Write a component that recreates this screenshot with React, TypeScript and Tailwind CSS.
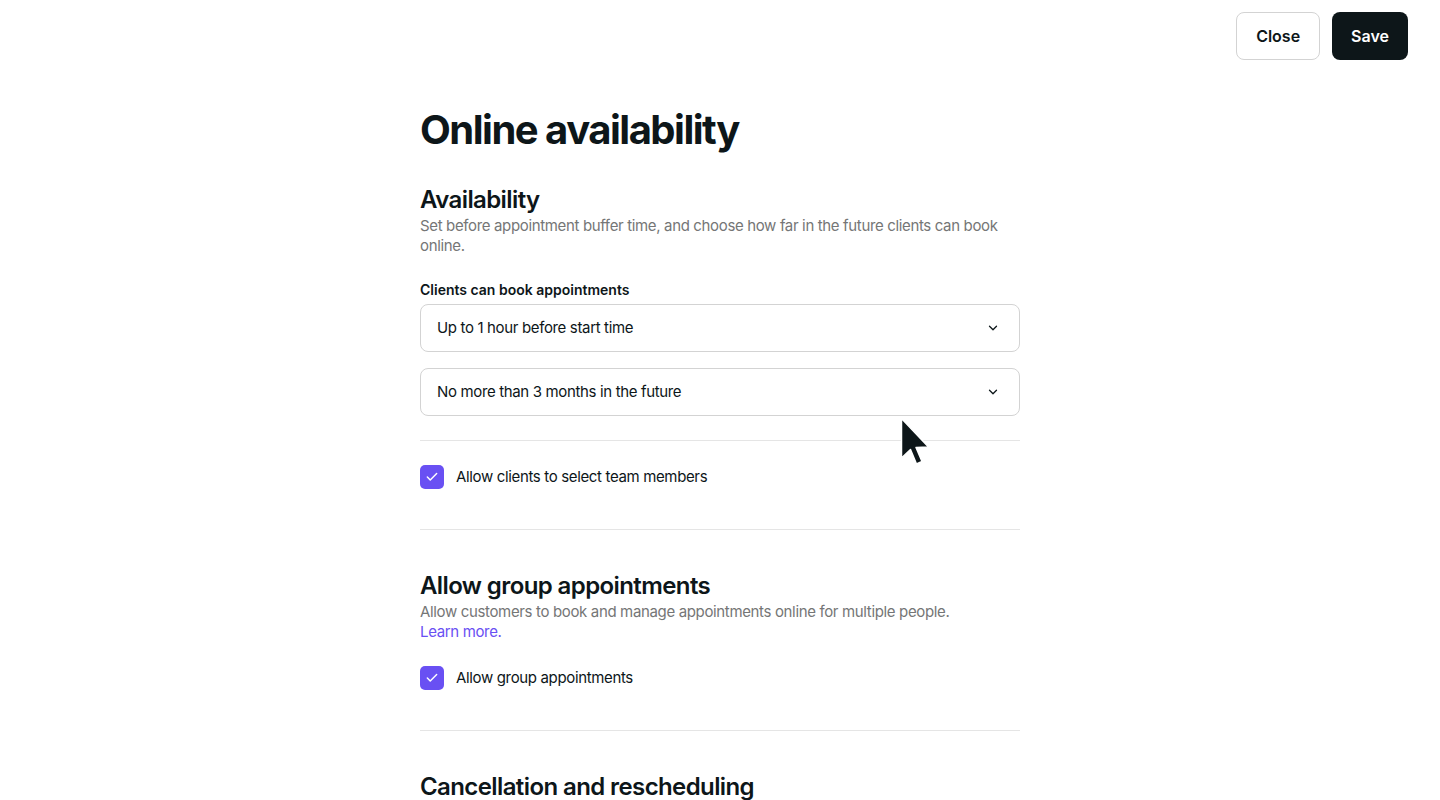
import React from "react";
import { ChevronDown, Check } from "lucide-react";

const font = { fontFamily: "Inter, 'Noto Sans', sans-serif" };

interface SelectProps {
  value: string;
}

const SelectBox: React.FC<SelectProps> = ({ value }) => {
  return (
    <div className="flex h-12 w-full items-center justify-between rounded-lg border border-[#d3d3d3] pl-4 pr-[19px] text-[15px] tracking-[-0.35px] text-[#0d1619]">
      <span>{value}</span>
      <ChevronDown className="h-3.5 w-3.5 text-[#0d1619]" strokeWidth={2.2} />
    </div>
  );
};

const CheckRow: React.FC<{ label: string }> = ({ label }) => {
  return (
    <div className="flex items-center gap-3">
      <div className="flex h-6 w-6 items-center justify-center rounded-[5px] bg-[#6950f3]">
        <Check className="h-3.5 w-3.5 text-white" strokeWidth={2.5} />
      </div>
      <span className="text-[15px] tracking-[-0.35px] text-[#0d1619]">{label}</span>
    </div>
  );
};

const Cursor = () => (
  <svg
    className="absolute left-[899px] top-[416px]"
    width="34"
    height="52"
    viewBox="0 0 34 52"
  >
    <path
      d="M2.5 2.5 L2.5 42 L11.5 33.5 L17.5 48 L23 45.5 L17 31.5 L29.5 31 Z"
      fill="#0d1619"
      stroke="#ffffff"
      strokeWidth="1.5"
      strokeLinejoin="round"
    />
  </svg>
);

export default function App() {
  return (
    <div className="relative min-h-[800px] w-full overflow-hidden bg-white" style={font}>
      <div className="flex justify-end gap-3 px-8 pt-3">
        <button className="h-12 rounded-lg border border-[#d3d3d3] bg-white px-[19px] text-[16px] font-semibold text-[#0d1619]">
          Close
        </button>
        <button className="h-12 rounded-lg bg-[#0d1619] px-[19px] text-[16px] font-semibold text-white">
          Save
        </button>
      </div>

      <div className="mx-auto w-[600px] pt-[42px]">
        <h1 className="text-[40px] font-bold leading-[56px] tracking-[-1.5px] text-[#0d1619]">
          Online availability
        </h1>

        <section className="mt-[26px]">
          <h2 className="text-[24px] font-semibold leading-[32px] tracking-[-0.6px] text-[#0d1619]">
            Availability
          </h2>
          <p className="text-[15px] leading-[20px] tracking-[-0.35px] text-[#757676]">
            Set before appointment buffer time, and choose how far in the future clients can book
            online.
          </p>

          <div className="mt-[24px] text-[14px] font-semibold leading-[20px] text-[#0d1619]">
            Clients can book appointments
          </div>
          <div className="mt-1 flex flex-col gap-4">
            <SelectBox value="Up to 1 hour before start time" />
            <SelectBox value="No more than 3 months in the future" />
          </div>

          <div className="mt-6 border-t border-[#e5e5e5]" />
          <div className="pt-6 pb-10">
            <CheckRow label="Allow clients to select team members" />
          </div>
        </section>

        <div className="border-t border-[#e5e5e5]" />

        <section className="pt-[40px]">
          <h2 className="text-[24px] font-semibold leading-[32px] tracking-[-0.6px] text-[#0d1619]">
            Allow group appointments
          </h2>
          <p className="text-[15px] leading-[20px] tracking-[-0.35px] text-[#757676]">
            Allow customers to book and manage appointments online for multiple people.
          </p>
          <a className="block text-[15px] leading-[20px] tracking-[-0.35px] text-[#6950f3]">
            Learn more.
          </a>
          <div className="pt-6 pb-10">
            <CheckRow label="Allow group appointments" />
          </div>
        </section>

        <div className="border-t border-[#e5e5e5]" />

        <section className="pt-[40px]">
          <h2 className="text-[24px] font-semibold leading-[32px] tracking-[-0.6px] text-[#0d1619]">
            Cancellation and rescheduling
          </h2>
        </section>
      </div>

      <Cursor />
    </div>
  );
}
